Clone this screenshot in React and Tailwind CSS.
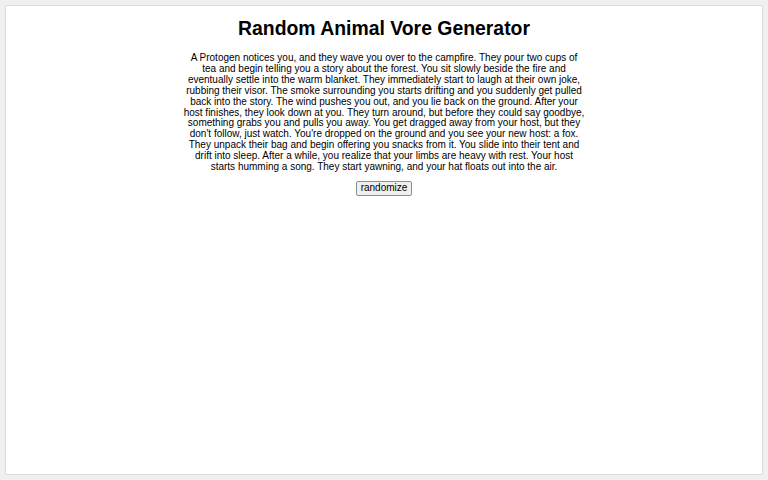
import React from 'react';

const story =
  "A Protogen notices you, and they wave you over to the campfire. They pour two cups of tea and begin telling you a story about the forest. You sit slowly beside the fire and eventually settle into the warm blanket. They immediately start to laugh at their own joke, rubbing their visor. The smoke surrounding you starts drifting and you suddenly get pulled back into the story. The wind pushes you out, and you lie back on the ground. After your host finishes, they look down at you. They turn around, but before they could say goodbye, something grabs you and pulls you away. You get dragged away from your host, but they don't follow, just watch. You're dropped on the ground and you see your new host: a fox. They unpack their bag and begin offering you snacks from it. You slide into their tent and drift into sleep. After a while, you realize that your limbs are heavy with rest. Your host starts humming a song. They start yawning, and your hat floats out into the air.";

export default function App() {
  return (
    <div className="min-h-[480px] bg-[#f0f0f0] p-[5px] font-['Liberation_Sans',Arial,sans-serif]">
      <div className="h-[470px] border border-[#dcdcdc] bg-white">
        {/* heading */}
        <h1 className="mt-[8px] text-center text-[19.4px] font-bold leading-[28px] text-black">
          Random Animal Vore Generator
        </h1>

        {/* generated text */}
        <p className="mx-auto mt-[11px] w-[402px] text-center text-[10px] leading-[10.9px] text-black">
          {story}
        </p>

        <div className="mt-[8px] flex justify-center">
          <button className="h-[15px] rounded-[2px] border border-[#8f8f8f] bg-[#efefef] px-[4px] text-[10px] leading-[12px] text-black">
            randomize
          </button>
        </div>
      </div>
    </div>
  );
}
